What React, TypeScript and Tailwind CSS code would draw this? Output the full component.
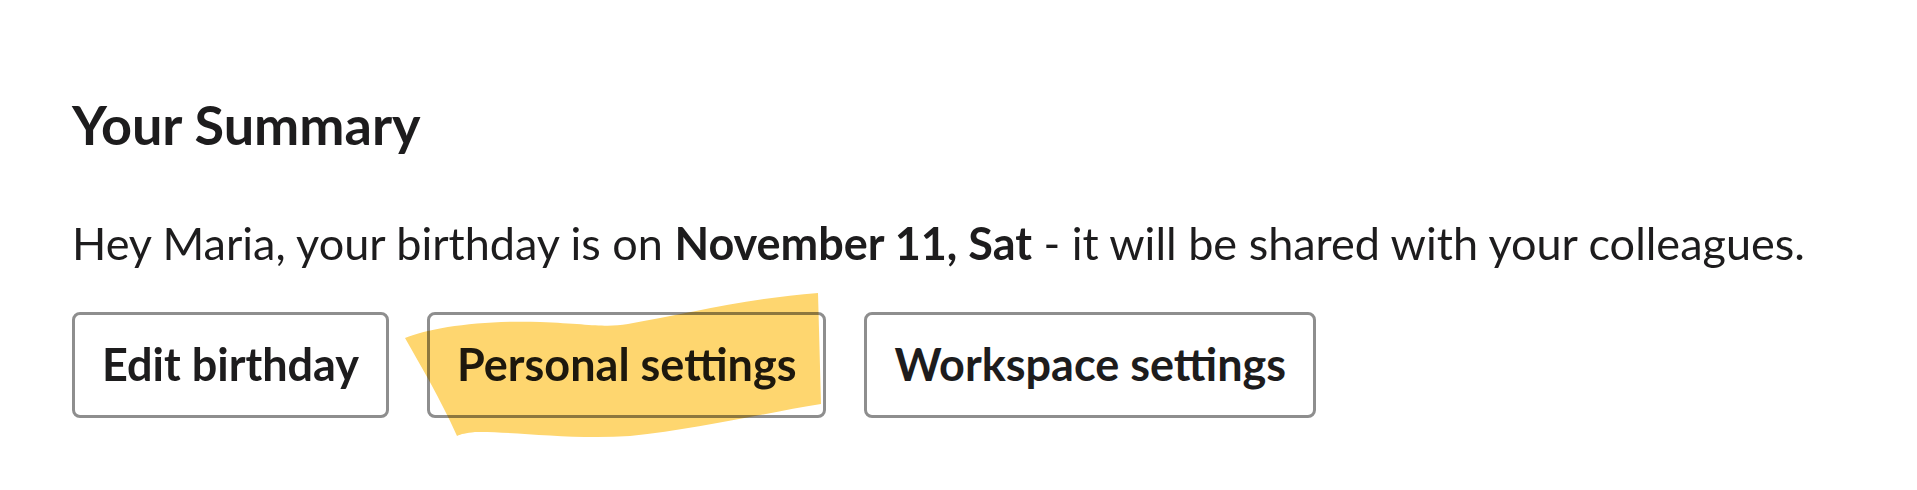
import type { ReactNode } from "react";

function Highlight() {
  // brush-stroke marker drawn over the "Personal settings" button
  return (
    <svg
      className="pointer-events-none absolute left-[-27px] top-[-24px] mix-blend-multiply"
      width="430"
      height="154"
      viewBox="0 0 430 154"
    >
      <path
        d="M5 50 C 30 40, 80 32, 140 34 C 190 36, 205 40, 228 36 C 285 26, 350 10, 418 5 L 421 116 C 370 124, 300 141, 230 148 C 170 152, 110 143, 75 144 C 66 145, 61 146, 57 148 C 40 110, 22 80, 5 50 Z"
        fill="#FED66F"
      />
    </svg>
  );
}

function OutlineButton({
  children,
  highlighted = false,
}: {
  children: ReactNode;
  highlighted?: boolean;
}) {
  return (
    <div className="relative">
      <button className="flex h-[106px] items-center rounded-[8px] border-[3px] border-[#8e8e8e] bg-white px-[27px] text-[45px] font-bold text-[#1d1c1d]">
        {children}
      </button>
      {highlighted && <Highlight />}
    </div>
  );
}

export default function App() {
  return (
    <div
      className="h-[490px] w-full bg-white pl-[72px] pt-[93px] text-[#1d1c1d]"
      style={{ fontFamily: "Lato, 'Liberation Sans', sans-serif" }}
    >
      <h2 className="text-[54px] font-bold leading-[64px]">Your Summary</h2>

      <p className="mt-[56px] text-[45px] leading-[60px]">
        Hey Maria, your birthday is on{" "}
        <span className="font-bold">November 11, Sat</span> - it will be
        shared with your colleagues.
      </p>

      <div className="mt-[39px] flex gap-[38px]">
        <OutlineButton>Edit birthday</OutlineButton>
        <OutlineButton highlighted>Personal settings</OutlineButton>
        <OutlineButton>Workspace settings</OutlineButton>
      </div>
    </div>
  );
}
